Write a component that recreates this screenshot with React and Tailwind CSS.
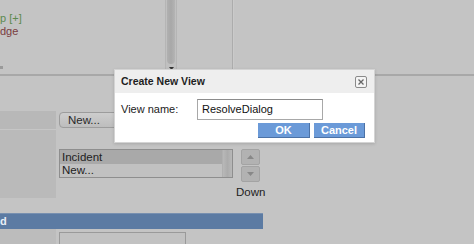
import React from "react";

const font = { fontFamily: '"Liberation Sans", Arial, Helvetica, sans-serif' };

function Tri({ down = false, color = "#8c8c8c", w = 7, h = 4 }) {
  return (
    <svg width={w} height={h} viewBox={`0 0 ${w} ${h}`}>
      {down ? (
        <polygon points={`0,0 ${w},0 ${w / 2},${h}`} fill={color} />
      ) : (
        <polygon points={`0,${h} ${w},${h} ${w / 2},0`} fill={color} />
      )}
    </svg>
  );
}

export default function App() {
  return (
    <div
      className="relative w-[474px] h-[244px] overflow-hidden bg-[#c4c4c4] text-[#222]"
      style={font}
    >
      {/* top area */}
      <div className="flex h-[74px]">
        <div className="relative w-[165px] pt-[12px] text-[11px] leading-[13px]">
          <div className="text-[#5c8a4e]">p [+]</div>
          <div className="text-[#7a3c40]">dge</div>
          <div className="absolute left-0 top-[66px] w-[3px] h-[3px] bg-[#9a9a9a]" />
        </div>
        <div className="w-[12px] flex flex-col items-center bg-[#c0c0c0] border-x border-[#b5b5b5]">
          <div className="w-[8px] h-[64px] rounded-b-[4px] bg-gradient-to-r from-[#b0b0b0] via-[#a8a8a8] to-[#b4b4b4]" />
          <div className="mt-[3px]">
            <Tri down color="#333" w={5} h={3} />
          </div>
        </div>
        <div className="w-[55px]" />
        <div className="w-px bg-[#acacac]" />
        <div className="w-px bg-[#cacaca]" />
      </div>
      <div className="h-[2px] bg-[#a8a8a8]" />

      {/* middle */}
      <div className="flex h-[137px]">
        <div className="w-[56px] pt-[35px]">
          <div className="h-[18px] bg-[#b8b8b8]" />
          <div className="h-px bg-[#c6c6c6]" />
          <div className="h-[68px] bg-[#bababa]" />
        </div>
        <div className="ml-[3px] pt-[36px]">
          <div className="w-[130px] h-[16px] rounded-[4px] border border-[#9c9c9c] bg-gradient-to-b from-[#cdcdcd] to-[#bdbdbd] pl-[8px] text-[11.5px] leading-[14px] text-[#2a2a2a]">
            New...
          </div>
          <div className="mt-[21px] flex items-start">
            <div className="w-[174px] h-[29px] border border-[#8e8e8e] bg-[#c1c1c1] flex">
              <div className="flex-1 text-[11.5px] leading-[14px] text-[#222]">
                <div className="h-[14px] bg-[#a9a9a9] pl-[2px]">Incident</div>
                <div className="h-[13px] pl-[2px] leading-[12px]">New...</div>
              </div>
              <div className="w-[10px] bg-gradient-to-r from-[#b8b8b8] via-[#acacac] to-[#b8b8b8] border-l border-[#b0b0b0]" />
            </div>
            <div className="ml-[3px] flex flex-col items-center">
              <div className="w-[19px] h-[16px] rounded-[2px] border border-[#a3a3a3] bg-[#b2b2b2] flex items-center justify-center">
                <Tri color="#888" />
              </div>
              <div className="mt-[1px] w-[19px] h-[16px] rounded-[2px] border border-[#a3a3a3] bg-[#b2b2b2] flex items-center justify-center">
                <Tri down color="#888" />
              </div>
              <div className="mt-[3px] text-[11.5px] leading-[14px] text-[#222]">Down</div>
            </div>
          </div>
        </div>
      </div>

      {/* blue bar */}
      <div className="w-[263px] h-[16px] bg-[#5c7ba3] border-t border-[#7890b0] text-[11px] leading-[15px] font-bold text-[#e8eef6]">
        d
      </div>
      <div className="flex h-[20px]">
        <div className="w-[56px] bg-[#bcbcbc]" />
        <div className="ml-[3px] mt-[3px] w-[127px] h-[20px] border border-[#9a9a9a] bg-[#c2c2c2]" />
      </div>

      {/* dialog overlay */}
      <div className="absolute left-[114px] top-[69px] w-[261px] h-[74px] bg-white border border-[#d4d4d4] shadow-[0_1px_3px_rgba(0,0,0,0.15)] flex flex-col">
        <div className="h-[23px] bg-[#eeeeee] flex items-center justify-between pl-[6px] pr-[7px]">
          <span className="text-[10.5px] font-bold text-[#1e1e1e]">Create New View</span>
          <div className="w-[12px] h-[12px] border border-[#8a8a8a] rounded-[2px] flex items-center justify-center bg-[#f4f4f4]">
            <svg width="8" height="8" viewBox="0 0 8 8">
              <path d="M1.5 1.5 L6.5 6.5 M6.5 1.5 L1.5 6.5" stroke="#666" strokeWidth="1.3" />
            </svg>
          </div>
        </div>
        <div className="flex items-center mt-[6px] pl-[6px]">
          <span className="w-[76px] text-[11px] text-[#222]">View name:</span>
          <div className="w-[126px] h-[21px] border border-[#a8a8a8] border-t-[#8c8c8c] pl-[4px] text-[11px] leading-[19px] text-[#111]">
            ResolveDialog
          </div>
        </div>
        <div className="flex justify-end mt-[3px] pr-[9px] gap-[4px]">
          <div className="w-[52px] h-[15px] bg-[#6b9ad8] border-b border-r border-[#4c72a6] text-white text-[11px] font-bold leading-[14px] text-center">
            OK
          </div>
          <div className="w-[51px] h-[15px] bg-[#6b9ad8] border-b border-r border-[#4c72a6] text-white text-[11px] font-bold leading-[14px] text-center">
            Cancel
          </div>
        </div>
      </div>
    </div>
  );
}
